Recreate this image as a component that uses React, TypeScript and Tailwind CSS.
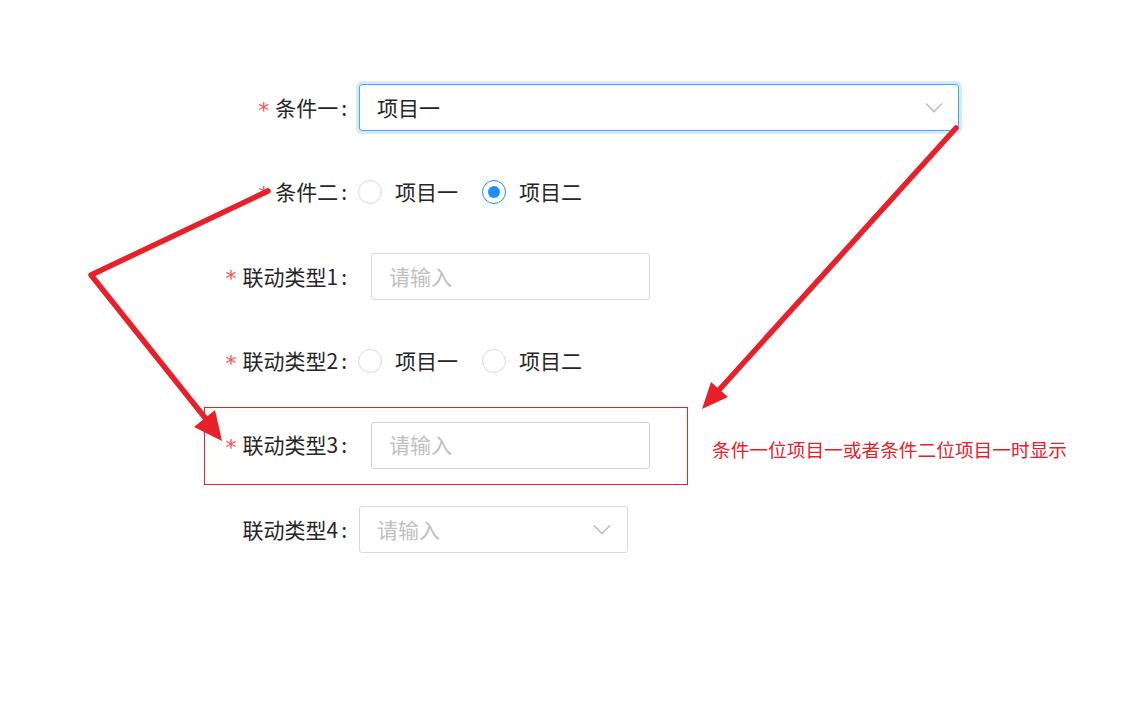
import React from 'react';

const font = { fontFamily: '"Noto Sans CJK SC", "Noto Sans", sans-serif' };

const Star = () => (
  <span className="mr-[6px] mt-[6px] text-[22px] text-[#ff4d4f] leading-none" style={{ fontFamily: '"DejaVu Sans", sans-serif' }}>
    *
  </span>
);

const Label = ({ text, required = true }: { text: string; required?: boolean }) => (
  <div className="flex w-[349px] shrink-0 items-center justify-end text-[21px] text-[#262626]">
    {required && <Star />}
    <span>{text}</span>
    <span className="ml-[3px] mr-[2px]">:</span>
  </div>
);

const Chevron = ({ className }: { className?: string }) => (
  <svg className={className} width="18" height="11" viewBox="0 0 18 11" fill="none">
    <path d="M1 1.5 L9 9.5 L17 1.5" stroke="#bfbfbf" strokeWidth="1.6" />
  </svg>
);

const Radio = ({ label, checked = false }: { label: string; checked?: boolean }) => (
  <div className="flex items-center">
    <span
      className={
        checked
          ? 'flex h-[24px] w-[24px] items-center justify-center rounded-full border border-[#1890ff] bg-white'
          : 'flex h-[24px] w-[24px] items-center justify-center rounded-full border border-[#d9d9d9] bg-white'
      }
    >
      {checked && <span className="h-[12px] w-[12px] rounded-full bg-[#1890ff]" />}
    </span>
    <span className="ml-[13px] text-[21px] text-[#262626]">{label}</span>
  </div>
);

const Row = ({ children, className = '' }: { children: React.ReactNode; className?: string }) => (
  <div className={'flex h-[47px] items-center ' + className}>{children}</div>
);

export default function App() {
  return (
    <div className="relative h-[711px] w-[1124px] overflow-hidden bg-white" style={font}>
      <div className="flex flex-col gap-[37.4px] pt-[84px]">
        <Row>
          <Label text="条件一" />
          <div className="ml-[10px] flex h-[47px] w-[600px] items-center justify-between rounded-[3px] border border-[#40a9ff] pl-[17px] pr-[15px] shadow-[0_0_0_3px_rgba(24,144,255,0.18)]">
            <span className="text-[21px] text-[#262626]">项目一</span>
            <Chevron />
          </div>
        </Row>
        <Row>
          <Label text="条件二" />
          <div className="ml-[9px] flex items-center gap-[24px]">
            <Radio label="项目一" />
            <Radio label="项目二" checked />
          </div>
        </Row>
        <Row>
          <Label text="联动类型1" />
          <div className="ml-[22px] flex h-[47px] w-[279px] items-center rounded-[3px] border border-[#d9d9d9] pl-[17px] text-[21px] text-[#bfbfbf]">
            请输入
          </div>
        </Row>
        <Row>
          <Label text="联动类型2" />
          <div className="ml-[9px] flex items-center gap-[24px]">
            <Radio label="项目一" />
            <Radio label="项目二" />
          </div>
        </Row>
        <Row className="relative">
          <div className="pointer-events-none absolute left-[204px] top-[-15px] h-[78px] w-[484px] border border-[#e8202a]" />
          <Label text="联动类型3" />
          <div className="ml-[22px] flex h-[47px] w-[279px] items-center rounded-[3px] border border-[#d0d4da] pl-[17px] text-[21px] text-[#bfbfbf]">
            请输入
          </div>
          <span className="ml-[62px] mt-[8px] text-[18.7px] text-[#e8202a]">条件一位项目一或者条件二位项目一时显示</span>
        </Row>
        <Row>
          <Label text="联动类型4" required={false} />
          <div className="ml-[10px] flex h-[47px] w-[269px] items-center justify-between rounded-[3px] border border-[#d9d9d9] pl-[17px] pr-[16px]">
            <span className="text-[21px] text-[#bfbfbf]">请输入</span>
            <Chevron />
          </div>
        </Row>
      </div>

      {/* annotation arrows */}
      <svg className="pointer-events-none absolute left-0 top-0" width="1124" height="711" viewBox="0 0 1124 711">
        <polyline
          points="268,191 91,275 206,419"
          fill="none"
          stroke="#e8202a"
          strokeWidth="5.5"
          strokeLinecap="round"
          strokeLinejoin="round"
        />
        <polygon points="222,441 194,427 215,410" fill="#e8202a" />
        <line x1="956" y1="128" x2="719" y2="390" stroke="#e8202a" strokeWidth="5.5" strokeLinecap="round" />
        <polygon points="702,409 711,382 728,397" fill="#e8202a" />
      </svg>
    </div>
  );
}
